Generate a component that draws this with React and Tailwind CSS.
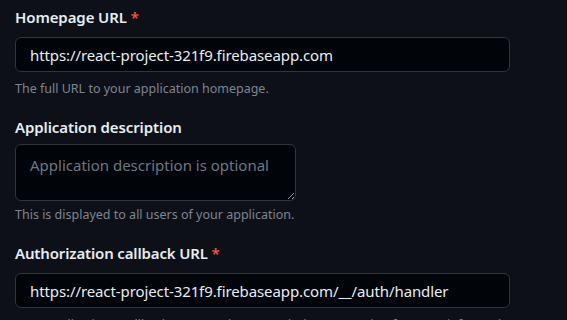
import React from "react";

const font = { fontFamily: '"Noto Sans", "Open Sans", sans-serif' };

export default function App() {
  return (
    <div className="w-[567px] h-[320px] overflow-hidden bg-[#0d1117] px-[15px] pt-[7px] [color-scheme:dark]" style={font}>
      <label className="block h-[20px] leading-[20px] text-[15px] font-semibold text-[#e6edf3] tracking-[-0.1px]">
        Homepage URL <span className="text-[#f85149]">*</span>
      </label>
      <input
        readOnly
        value="https://react-project-321f9.firebaseapp.com"
        className="mt-[10px] block w-[495px] h-[35px] rounded-[6px] border border-[#30363d] bg-[#010409] px-[14px] text-[15px] tracking-[-0.1px] text-[#e6edf3] outline-none"
        style={font}
      />
      <p className="mt-[8px] h-[18px] leading-[18px] text-[12.5px] text-[#7d8590]">
        The full URL to your application homepage.
      </p>
      <label className="mt-[19px] block h-[20px] leading-[20px] text-[15px] font-semibold text-[#e6edf3] tracking-[-0.1px]">
        Application description
      </label>
      <textarea
        placeholder="Application description is optional"
        className="mt-[7px] block w-[281px] h-[57px] rounded-[6px] border border-[#30363d] bg-[#010409] px-[14px] pt-[8px] text-[15px] leading-[24px] text-[#e6edf3] placeholder:text-[#6e7681] outline-none"
        style={font}
      />
      <p className="mt-[5px] h-[18px] leading-[18px] text-[12.5px] text-[#7d8590]">
        This is displayed to all users of your application.
      </p>
      <label className="mt-[19px] block h-[20px] leading-[20px] text-[15px] font-semibold text-[#e6edf3] tracking-[-0.15px]">
        Authorization callback URL <span className="text-[#f85149]">*</span>
      </label>
      <input
        readOnly
        value="https://react-project-321f9.firebaseapp.com/__/auth/handler"
        className="mt-[10px] block w-[495px] h-[35px] rounded-[6px] border border-[#30363d] bg-[#010409] px-[14px] text-[15px] tracking-[-0.1px] text-[#e6edf3] outline-none"
        style={font}
      />
      <p className="mt-[8px] h-[18px] leading-[18px] text-[12.5px] text-[#7d8590] whitespace-nowrap">
        Your application's callback URL. Read our <span className="text-[#2f81f7]">OAuth documentation</span> for more information.
      </p>
    </div>
  );
}
